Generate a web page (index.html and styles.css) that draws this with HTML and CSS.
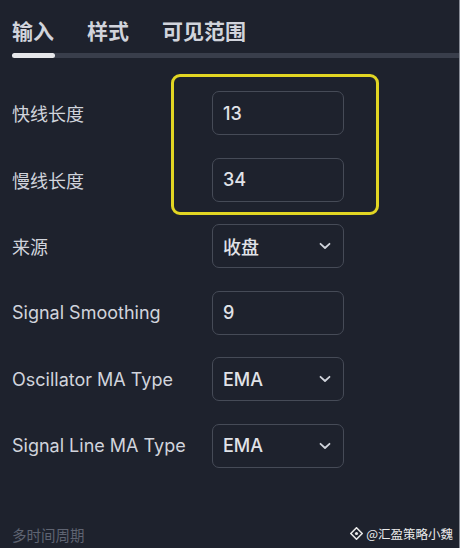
FILE: index.html
```html
<!DOCTYPE html>
<html>
<head>
<meta charset="utf-8" />
<title>设置</title>
<link rel="stylesheet" href="styles.css">
</head>
<body>
<div class="panel">
	<div class="tabs">
		<div class="tab active">输入</div>
		<div class="tab">样式</div>
		<div class="tab">可见范围</div>
	</div>
	<div class="tabbar"><div class="indicator"></div></div>

	<div class="form">
		<div class="label">快线长度</div>
		<div class="field">13</div>

		<div class="label">慢线长度</div>
		<div class="field">34</div>

		<div class="label">来源</div>
		<div class="field select">收盘<span class="chev"><svg width="12" height="8" viewBox="0 0 12 8"><path d="M1.5 1.8 L6 6 L10.5 1.8" fill="none" stroke="#d1d4dc" stroke-width="1.8" stroke-linecap="round" stroke-linejoin="round"/></svg></span></div>

		<div class="label">Signal Smoothing</div>
		<div class="field">9</div>

		<div class="label">Oscillator MA Type</div>
		<div class="field select">EMA<span class="chev"><svg width="12" height="8" viewBox="0 0 12 8"><path d="M1.5 1.8 L6 6 L10.5 1.8" fill="none" stroke="#d1d4dc" stroke-width="1.8" stroke-linecap="round" stroke-linejoin="round"/></svg></span></div>

		<div class="label">Signal Line MA Type</div>
		<div class="field select">EMA<span class="chev"><svg width="12" height="8" viewBox="0 0 12 8"><path d="M1.5 1.8 L6 6 L10.5 1.8" fill="none" stroke="#d1d4dc" stroke-width="1.8" stroke-linecap="round" stroke-linejoin="round"/></svg></span></div>
	</div>

	<div class="section">多时间周期</div>

	<div class="highlight"></div>
	<div class="watermark">
		<svg width="13" height="13" viewBox="0 0 13 13"><path d="M6.5 0.8 L12.2 6.5 L6.5 12.2 L0.8 6.5 Z" fill="none" stroke="#e8e8e8" stroke-width="1.6"/><circle cx="6.5" cy="6.5" r="1.6" fill="#e8e8e8"/></svg>
		<span>@汇盈策略小魏</span>
	</div>
</div>
</body>
</html>
```

FILE: styles.css
```css
*{
	box-sizing: border-box;
}

body{
	margin: 0;
	background-color: #1e222d;
	font-family: Inter, "Noto Sans CJK SC", sans-serif;
	color: #d1d4dc;
}

.panel{
	position: relative;
	height: 548px;
	padding-left: 12px;
	border-right: 1px solid #8a8e98;
	overflow: hidden;
}

.tabs{
	display: flex;
	gap: 33px;
	padding-top: 20px;
}

.tab{
	font-size: 21px;
	line-height: 24px;
	font-weight: 600;
	color: #d1d4dc;
}

.tabbar{
	margin-top: 9px;
	height: 5px;
	background-color: #393e4b;
	border-radius: 3px 0 0 3px;
}

.indicator{
	width: 43px;
	height: 5px;
	background-color: #e6e7ea;
	border-radius: 3px;
}

.form{
	display: grid;
	grid-template-columns: 200px 132px;
	row-gap: 22.5px;
	margin-top: 33px;
	align-items: center;
}

.label{
	font-size: 18px;
	color: #d1d4dc;
}

.field{
	display: flex;
	align-items: center;
	justify-content: space-between;
	height: 44px;
	padding: 0 12px 0 10px;
	border: 1px solid #464b57;
	border-radius: 7px;
	font-size: 18px;
	font-weight: 500;
	color: #e1e3e8;
}

.chev{
	display: flex;
	align-items: center;
}

.section{
	margin-top: 58px;
	font-size: 14.5px;
	line-height: 20px;
	color: #5f6472;
}

.highlight{
	position: absolute;
	left: 171px;
	top: 74px;
	width: 208px;
	height: 141px;
	border: 3px solid #e2d623;
	border-radius: 9px;
}

.watermark{
	position: absolute;
	right: 6px;
	bottom: 5px;
	display: flex;
	align-items: center;
	gap: 3px;
	font-size: 12.5px;
	color: #ececec;
	font-family: "Noto Sans CJK SC", sans-serif;
}
```
